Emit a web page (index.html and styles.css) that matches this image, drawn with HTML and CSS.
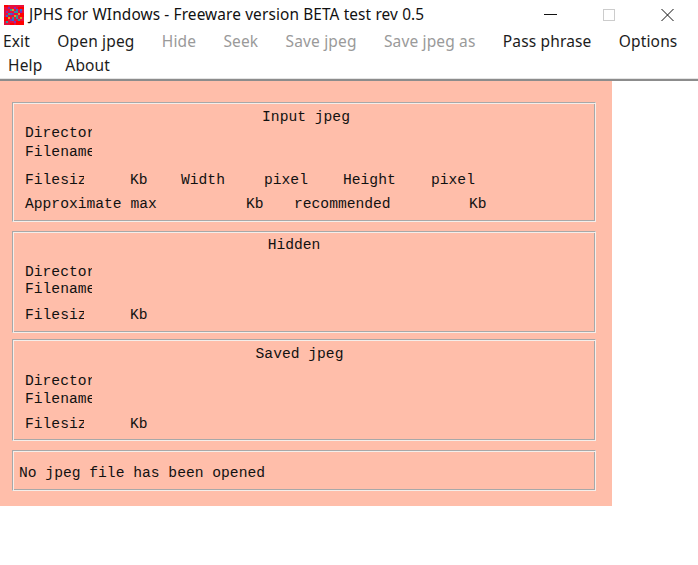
FILE: index.html
```html
<!DOCTYPE html>
<html lang="en">
<head>
<meta charset="utf-8">
<title>JPHS for WIndows</title>
<link rel="stylesheet" href="styles.css">
</head>
<body>
<header class="titlebar">
  <svg class="appicon" width="20" height="20" viewBox="0 0 20 20" shape-rendering="crispEdges" aria-hidden="true">
    <rect width="20" height="20" fill="#e8103a"/>
    <path fill="#ff0000" d="M0 0h4v2H0zM14 2h6v2h-6zM0 12h4v4H0zM12 16h8v4h-8zM6 18h4v2H6zM16 8h4v4h-4z"/>
    <path fill="#2a9a9a" d="M6 4h2v2H6zM10 6h4v2h-4zM4 8h2v2H4zM12 10h2v4h-2zM8 12h2v2H8zM14 14h2v2h-2zM2 16h2v2H2z"/>
    <path fill="#8a2ab0" d="M4 2h2v2H4zM10 2h2v2h-2zM2 6h2v2H2zM8 8h2v2H8zM16 6h2v2h-2zM6 14h2v2H6zM10 16h2v2h-2z"/>
    <path fill="#d8a020" d="M8 4h2v2H8zM14 8h2v2h-2zM4 12h2v2H4zM10 10h2v2h-2zM16 12h2v2h-2z"/>
    <path fill="#2f6fd0" d="M12 4h2v2h-2zM6 8h2v2H6zM2 10h2v2H2zM8 14h2v2H8zM16 4h2v2h-2z"/>
  </svg>
  <span class="wintitle">JPHS for WIndows - Freeware version BETA test rev 0.5</span>
  <div class="controls">
    <svg width="13" height="12" viewBox="0 0 13 12" aria-hidden="true"><path d="M0 5.5h13" stroke="#111" fill="none"/></svg>
    <svg width="12" height="12" viewBox="0 0 12 12" aria-hidden="true"><rect x=".5" y=".5" width="11" height="11" stroke="#ccc" fill="none"/></svg>
    <svg width="13" height="12" viewBox="0 0 13 12" aria-hidden="true"><path d="M.5 0l12 12M12.5 0L.5 12" stroke="#111" fill="none"/></svg>
  </div>
</header>
<nav class="menubar">
  <div class="menurow first">
    <span>Exit</span><span>Open jpeg</span><span class="off">Hide</span><span class="off">Seek</span><span class="off">Save jpeg</span><span class="off">Save jpeg as</span><span>Pass phrase</span><span>Options</span>
  </div>
  <div class="menurow second">
    <span>Help</span><span>About</span>
  </div>
</nav>
<main class="client">
  <section class="panel input">
    <h2 class="head">Input jpeg</h2>
    <div class="clip">Directory</div>
    <div class="clip">Filename</div>
    <div class="row sizes"><span class="short">Filesize</span><span class="c-kb">Kb</span><span class="c-w">Width</span><span class="c-px">pixel</span><span class="c-h">Height</span><span>pixel</span></div>
    <div class="row approx"><span class="c-ap">Approximate max</span><span class="c-kb2">Kb</span><span class="c-rec">recommended</span><span>Kb</span></div>
  </section>
  <section class="panel hidden-p">
    <h2 class="head">Hidden</h2>
    <div class="clip">Directory</div>
    <div class="clip">Filename</div>
    <div class="row sizes"><span class="short">Filesize</span><span>Kb</span></div>
  </section>
  <section class="panel saved">
    <h2 class="head">Saved jpeg</h2>
    <div class="clip">Directory</div>
    <div class="clip">Filename</div>
    <div class="row sizes"><span class="short">Filesize</span><span>Kb</span></div>
  </section>
  <section class="panel status">No jpeg file has been opened</section>
</main>
</body>
</html>
```
FILE: styles.css
```css
* { box-sizing: border-box; }
html, body { margin: 0; background: #fff; }
body { width: 698px; height: 565px; overflow: hidden; font-family: "Noto Sans", sans-serif; color: #111; }

.titlebar { height: 29px; display: flex; align-items: center; padding-left: 4px; }
.appicon { flex: none; }
.wintitle { margin-left: 5px; font-size: 15.4px; letter-spacing: .12px; white-space: nowrap; }
.controls { margin-left: auto; display: flex; gap: 46px; padding-right: 24px; }
.controls svg { display: block; }

.menubar { height: 52px; border-bottom: 2px solid #8c8c8c; box-shadow: inset 0 -1px 0 #e4e4e4; font-size: 15.5px; letter-spacing: .15px; color: #1c1c1c; }
.menurow { display: flex; line-height: 24px; white-space: nowrap; }
.menurow.first { height: 24px; gap: 27.3px; padding-left: 3px; }
.menurow.second { height: 23px; gap: 23px; padding-left: 8px; }
.off { color: #9a9a9a; }

.client { width: 612px; height: 425px; background: #ffbeaa; padding: 21px 16px 0 12px; font-family: "Liberation Mono", monospace; font-size: 14.65px; line-height: 19px; color: #111; }
.panel { border: 1px solid; border-color: #a8a8a8 #f4eeea #f4eeea #a8a8a8; box-shadow: inset 1px 1px 0 #f4eeea, inset -1px -1px 0 #a8a8a8; padding: 5px 12px 0; }
.input { height: 120px; margin-bottom: 9px; }
.hidden-p { height: 102px; margin-bottom: 6px; padding-top: 4px; }
.saved { height: 102px; margin-bottom: 9px; }
.status { height: 41px; padding: 13px 6px 0; white-space: nowrap; }

.head { margin: 0; font: inherit; text-align: center; height: 27px; }
.input .head { height: 16px; padding-left: 4px; }
.hidden-p .head { height: 28px; padding-right: 20px; }
.saved .head { padding-right: 9px; }
.clip { width: 67px; height: 18px; line-height: 18px; overflow: hidden; white-space: nowrap; }
.input .clip { height: 19px; line-height: 19px; }
.hidden-p .clip { height: 17px; line-height: 17px; }
.row { display: flex; white-space: nowrap; height: 19px; }
.sizes { margin-top: 7px; }
.input .sizes { margin-top: 9px; }
.hidden-p .sizes { margin-top: 8px; }
.short { width: 59px; overflow: hidden; margin-right: 46px; flex: none; }
.c-kb { width: 51px; }
.c-w { width: 83px; }
.c-px { width: 79px; }
.c-h { width: 88px; }
.approx { margin-top: 5px; }
.c-ap { width: 221px; flex: none; }
.c-kb2 { width: 48px; }
.c-rec { width: 175px; }
```
